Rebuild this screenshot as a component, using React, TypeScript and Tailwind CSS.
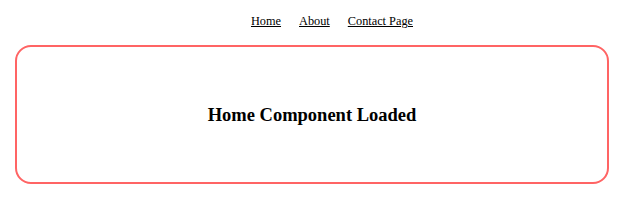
export default function App() {
  return (
    <div className="w-full bg-white" style={{ fontFamily: '"Liberation Serif", "Times New Roman", serif' }}>
      <ul className="flex justify-center gap-[18px] pl-10 pt-[13px] text-[12.3px] leading-[16px] text-black">
        <li><a href="#" className="underline">Home</a></li>
        <li><a href="#" className="underline">About</a></li>
        <li><a href="#" className="underline">Contact Page</a></li>
      </ul>
      <div className="mx-[15px] mt-[16px] flex h-[139px] items-center justify-center rounded-[16px] border-2 border-[#ff6464] pt-[2px]">
        <h2 className="text-[18.5px] font-bold text-black">Home Component Loaded</h2>
      </div>
    </div>
  );
}
